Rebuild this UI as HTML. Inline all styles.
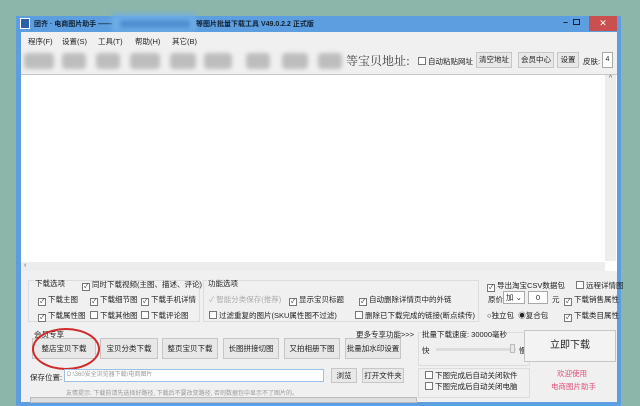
<!DOCTYPE html>
<html><head><meta charset="utf-8"><style>
*{margin:0;padding:0;box-sizing:border-box}
body{width:640px;height:401px;background:#8cb6aa;position:relative;overflow:hidden;font-family:"Liberation Sans","Noto Sans CJK SC",sans-serif;font-size:7.5px;color:#222}
.a{position:absolute;white-space:nowrap}
.win{position:absolute;left:16px;top:16px;width:605px;height:390px;background:#5c9ee0}
.client{position:absolute;left:21px;top:32px;width:596px;height:370px;background:#f0f0f0}
.btn{position:absolute;background:#e8e8e8;border:1px solid #c6c6c6;text-align:center;font-size:7.5px;color:#222;white-space:nowrap}
.cb{display:inline-block;width:8px;height:8px;border:1px solid #777;background:#fff;vertical-align:-1px;margin-right:2px;font-size:6px;line-height:6px;text-align:center}
.blob{position:absolute;top:53px;height:16px;background:#bdbdbd;border-radius:4px;filter:blur(2px)}
.grp{position:absolute;border:1px solid #dcdcdc}
</style></head><body>
<div class="win"></div>
<div class="a" style="left:20px;top:18px;width:10px;height:11px;border:1px solid #fff;background:#2c5fa8"></div>
<div class="a" style="left:34px;top:19px;font-size:7px;font-weight:bold;color:#123">团齐 · 电商图片助手 ——</div>
<div class="a" style="left:112px;top:14px;width:84px;height:18px;background:#6faee6;filter:blur(3px)"></div>
<div class="a" style="left:120px;top:20px;width:70px;height:8px;background:#4f8ed0;filter:blur(2px)"></div>
<div class="a" style="left:196px;top:19px;font-size:7px;font-weight:bold;color:#123">等图片批量下载工具 V49.0.2.2 正式版</div>
<div class="a" style="left:563px;top:17px;color:#123;font-weight:bold;font-size:9px">–</div>
<div class="a" style="left:573px;top:19px;width:7px;height:6px;border:1px solid #123"></div>
<div class="a" style="left:589px;top:16px;width:28px;height:15px;background:#c9504f;color:#fff;text-align:center;font-size:9px;line-height:15px">✕</div>
<div class="client"></div>
<div class="a" style="left:28px;top:36px">程序(F)</div>
<div class="a" style="left:62px;top:36px">设置(S)</div>
<div class="a" style="left:98px;top:36px">工具(T)</div>
<div class="a" style="left:135px;top:36px">帮助(H)</div>
<div class="a" style="left:172px;top:36px">其它(B)</div>
<div class="blob" style="left:24px;width:30px"></div>
<div class="blob" style="left:62px;width:24px"></div>
<div class="blob" style="left:96px;width:24px"></div>
<div class="blob" style="left:130px;width:30px"></div>
<div class="blob" style="left:170px;width:26px"></div>
<div class="blob" style="left:204px;width:28px"></div>
<div class="blob" style="left:246px;width:24px"></div>
<div class="blob" style="left:282px;width:26px"></div>
<div class="blob" style="left:318px;width:24px"></div>
<div class="a" style="left:346px;top:52px;font-family:'Noto Serif CJK SC',serif;font-size:12px;color:#444">等宝贝地址:</div>
<div class="a" style="left:418px;top:56px"><span class="cb"></span>自动粘贴网址</div>
<div class="btn" style="left:476px;top:52px;width:36px;height:16px;line-height:14px">清空地址</div>
<div class="btn" style="left:518px;top:52px;width:36px;height:16px;line-height:14px">会员中心</div>
<div class="btn" style="left:557px;top:52px;width:22px;height:16px;line-height:14px">设置</div>
<div class="a" style="left:583px;top:56px">皮肤:</div>
<div class="a" style="left:602px;top:52px;width:11px;height:16px;background:#fff;border:1px solid #aaa;font-size:7px;text-align:center;line-height:14px">4</div>
<div class="a" style="left:21px;top:74px;width:596px;height:197px;background:#fff;border-top:1px solid #c8c8c8"></div>
<div class="a" style="left:605px;top:75px;width:11px;height:186px;background:#ededed;font-size:7px;color:#555;text-align:center">^</div>
<div class="a" style="left:21px;top:262px;width:584px;height:9px;background:#ededed;font-size:7px;color:#555;padding-left:3px">‹</div>
<div class="grp" style="left:28px;top:280px;width:172px;height:42px"></div>
<div class="grp" style="left:203px;top:280px;width:276px;height:42px"></div>
<div class="a" style="left:34px;top:278px;background:#f0f0f0;padding:0 1px">下载选项</div>
<div class="a" style="left:82px;top:279px"><span class="cb">✓</span>同时下载视频(主图、描述、评论)</div>
<div class="a" style="left:38px;top:294px"><span class="cb">✓</span>下载主图</div>
<div class="a" style="left:90px;top:294px"><span class="cb">✓</span>下载细节图</div>
<div class="a" style="left:141px;top:294px"><span class="cb">✓</span>下载手机详情</div>
<div class="a" style="left:38px;top:310px"><span class="cb">✓</span>下载属性图</div>
<div class="a" style="left:90px;top:310px"><span class="cb"></span>下载其他图</div>
<div class="a" style="left:141px;top:310px"><span class="cb"></span>下载评论图</div>
<div class="a" style="left:207px;top:278px;background:#f0f0f0;padding:0 1px">功能选项</div>
<div class="a" style="left:209px;top:294px;color:#aaa">✓ 智能分类保存(推荐)</div>
<div class="a" style="left:289px;top:294px"><span class="cb">✓</span>显示宝贝标题</div>
<div class="a" style="left:359px;top:294px"><span class="cb">✓</span>自动删除详情页中的外链</div>
<div class="a" style="left:209px;top:310px"><span class="cb"></span>过滤重复的图片(SKU属性图不过滤)</div>
<div class="a" style="left:355px;top:310px"><span class="cb"></span>删除已下载完成的链接(断点续传)</div>
<div class="a" style="left:487px;top:280px"><span class="cb">✓</span>导出淘宝CSV数据包</div>
<div class="a" style="left:576px;top:280px"><span class="cb"></span>远程详情图</div>
<div class="a" style="left:488px;top:294px">原价</div>
<div class="a" style="left:503px;top:291px;width:22px;height:13px;background:#fff;border:1px solid #aaa;padding-left:2px;line-height:11px">加 ⌄</div>
<div class="a" style="left:528px;top:291px;width:20px;height:13px;background:#fff;border:1px solid #aaa;text-align:center;line-height:11px">0</div>
<div class="a" style="left:552px;top:294px">元</div>
<div class="a" style="left:564px;top:294px"><span class="cb">✓</span>下载销售属性</div>
<div class="a" style="left:487px;top:310px">○独立包 &nbsp;◉复合包</div>
<div class="a" style="left:564px;top:310px"><span class="cb">✓</span>下载类目属性</div>
<div class="a" style="left:34px;top:329px">会员专享</div>
<div class="a" style="left:356px;top:329px">更多专享功能&gt;&gt;&gt;</div>
<div class="btn" style="left:32px;top:338px;width:64px;height:21px;line-height:19px">整店宝贝下载</div>
<div class="btn" style="left:100px;top:338px;width:58px;height:21px;line-height:19px">宝贝分类下载</div>
<div class="btn" style="left:162px;top:338px;width:56px;height:21px;line-height:19px">整页宝贝下载</div>
<div class="btn" style="left:223px;top:338px;width:56px;height:21px;line-height:19px">长图拼接切图</div>
<div class="btn" style="left:284px;top:338px;width:56px;height:21px;line-height:19px">又拍相册下图</div>
<div class="btn" style="left:345px;top:338px;width:56px;height:21px;line-height:19px">批量加水印设置</div>
<div class="a" style="left:32px;top:328px;width:68px;height:42px;border:2px solid #d02b2b;border-radius:50%"></div>
<div class="grp" style="left:418px;top:332px;width:112px;height:34px"></div>
<div class="a" style="left:422px;top:329px;background:#f0f0f0">批量下载速度: 30000毫秒</div>
<div class="a" style="left:422px;top:345px">快</div>
<div class="a" style="left:436px;top:348px;width:80px;height:3px;background:#ddd"></div>
<div class="a" style="left:510px;top:344px;width:5px;height:9px;background:#e8e8e8;border:1px solid #bbb"></div>
<div class="a" style="left:519px;top:345px">慢</div>
<div class="btn" style="left:524px;top:330px;width:92px;height:32px;line-height:30px;font-size:10px;background:#f3f3f3">立即下载</div>
<div class="a" style="left:557px;top:368px;color:#e0507a">欢迎使用</div>
<div class="a" style="left:551px;top:381px;color:#e0507a">电商图片助手</div>
<div class="grp" style="left:418px;top:368px;width:112px;height:30px"></div>
<div class="a" style="left:425px;top:370px"><span class="cb"></span>下图完成后自动关闭软件</div>
<div class="a" style="left:425px;top:381px"><span class="cb"></span>下图完成后自动关闭电脑</div>
<div class="a" style="left:30px;top:372px">保存位置:</div>
<div class="a" style="left:64px;top:369px;width:260px;height:13px;background:#fff;border:1px solid #9cc0e6;color:#999;padding-left:2px;font-size:6px;line-height:11px">D:\360安全浏览器下载\电商图片</div>
<div class="btn" style="left:331px;top:368px;width:26px;height:15px;line-height:13px">浏览</div>
<div class="btn" style="left:362px;top:368px;width:42px;height:15px;line-height:13px">打开文件夹</div>
<div class="a" style="left:66px;top:388px;color:#999;font-size:6px">友情提示: 下载前请先选择好路径, 下载后不要改变路径, 否则数据包中显示不了图片的。</div>
<div class="a" style="left:30px;top:397px;width:387px;height:6px;background:#ddd;border:1px solid #bbb"></div>
</body></html>
